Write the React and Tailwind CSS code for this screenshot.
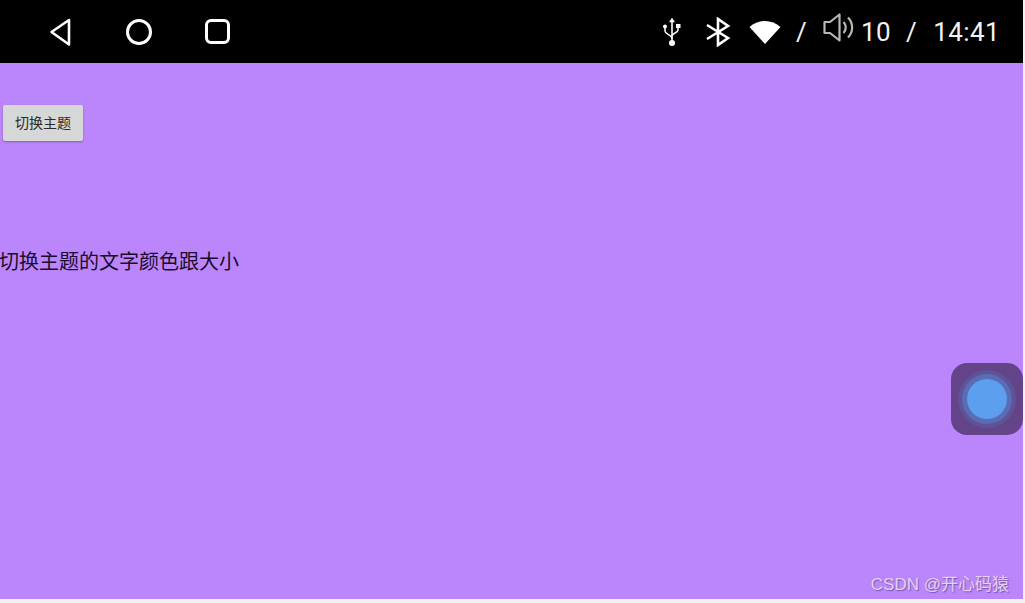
import React from "react";

const cjk = { fontFamily: '"Roboto","Noto Sans CJK SC",sans-serif' };

function Back() {
  return (
    <svg width="24" height="30" viewBox="0 0 24 30" fill="none" stroke="white" strokeWidth="2.6" strokeLinejoin="round">
      <path d="M20 4 L20 28.5 L2.5 16 Z" transform="translate(0 -1)" />
    </svg>
  );
}

function Usb() {
  return (
    <svg width="20" height="32" viewBox="0 0 20 32" fill="white" stroke="white">
      <path d="M10 2 L7.5 6 H12.5 Z" strokeWidth="0.5" />
      <path d="M10 5 V26" strokeWidth="1.6" fill="none" />
      <path d="M3 11 V15 C3 18 10 19 10 23" strokeWidth="1.5" fill="none" />
      <path d="M16 11 V14 C16 17 10 17 10 20" strokeWidth="1.5" fill="none" />
      <circle cx="3" cy="10.5" r="2" stroke="none" />
      <rect x="14" y="8" width="4.5" height="4" stroke="none" />
      <circle cx="10" cy="27" r="3" stroke="none" />
    </svg>
  );
}

function Bluetooth() {
  return (
    <svg width="26" height="30" viewBox="0 0 26 30" fill="none" stroke="white" strokeWidth="2.6">
      <path d="M2 8 L23 21 L13 28 V2 L23 9 L2 22" />
    </svg>
  );
}

function Wifi() {
  return (
    <svg width="32" height="26" viewBox="0 0 32 26" fill="white">
      <path d="M0.5 8 C9 0 23 0 31.5 8 L16 25 Z" />
    </svg>
  );
}

function Volume() {
  return (
    <svg width="32" height="30" viewBox="0 0 32 30" fill="none" stroke="#b8b8b8" strokeWidth="2.2">
      <path d="M1.5 9 H7 L16.5 1.5 V27.5 L7 20 H1.5 Z" strokeLinejoin="round" />
      <path d="M20.5 9 C23.5 12 23.5 17 20.5 20" />
      <path d="M25 4.5 C30.5 10 30.5 19 25 24.5" />
    </svg>
  );
}

export default function App() {
  return (
    <div className="w-[1025px] h-[603px] bg-[#f1f1f1] overflow-hidden">
      <div className="w-[1023px] h-[599px] bg-[#bb86fc] flex flex-col relative" style={cjk}>
        <header className="h-[63px] bg-black flex items-center justify-between shrink-0">
          <div className="flex items-center">
            <div className="ml-[49px] w-[24px] flex"><Back /></div>
            <div className="ml-[53px] w-[26px] h-[26px] rounded-full border-[3px] border-white" />
            <div className="ml-[53px] w-[25px] h-[25px] rounded-[6px] border-[3px] border-white" />
          </div>
          <div className="flex items-center text-[#f2f2f2] text-[26px] mr-[23px] tracking-[0.4px]">
            <Usb />
            <div className="ml-[23px] flex"><Bluetooth /></div>
            <div className="ml-[18px] flex"><Wifi /></div>
            <span className="ml-[15px] mt-[2px]">/</span>
            <div className="ml-[16px] flex -mt-[7px]"><Volume /></div>
            <span className="ml-[6px] mt-[2px]">10</span>
            <span className="ml-[15px] mt-[2px]">/</span>
            <span className="ml-[16px] mt-[2px]">14:41</span>
          </div>
        </header>
        <main className="flex-1 flex flex-col items-start">
          <button className="mt-[42px] ml-[3px] w-[80px] h-[36px] bg-[#d6d7d7] rounded-[2px] text-[14px] text-[#2a2a2a] shadow-[0_1px_2px_rgba(0,0,0,0.3)]">切换主题</button>
          <p className="mt-[108px] -ml-px text-[20px] leading-[26px] text-[#1a0a2e]">切换主题的文字颜色跟大小</p>
        </main>
        <div className="absolute left-[951px] top-[363px] w-[72px] h-[72px] rounded-[16px] bg-[#634488] flex items-center justify-center">
          <div className="w-[58px] h-[58px] rounded-full bg-[#5e5299] flex items-center justify-center">
            <div className="w-[50px] h-[50px] rounded-full bg-[#5a6cb4] flex items-center justify-center">
              <div className="w-[40px] h-[40px] rounded-full bg-[#5b9fee]" />
            </div>
          </div>
        </div>
        <span className="absolute right-[14px] top-[573px] text-[17px] leading-[24px] text-[#e3d0f3] [text-shadow:1px_1px_1px_rgba(60,40,80,0.5)]" style={{ fontFamily: '"Liberation Sans","Noto Sans CJK SC",sans-serif' }}>CSDN @开心码猿</span>
      </div>
    </div>
  );
}
